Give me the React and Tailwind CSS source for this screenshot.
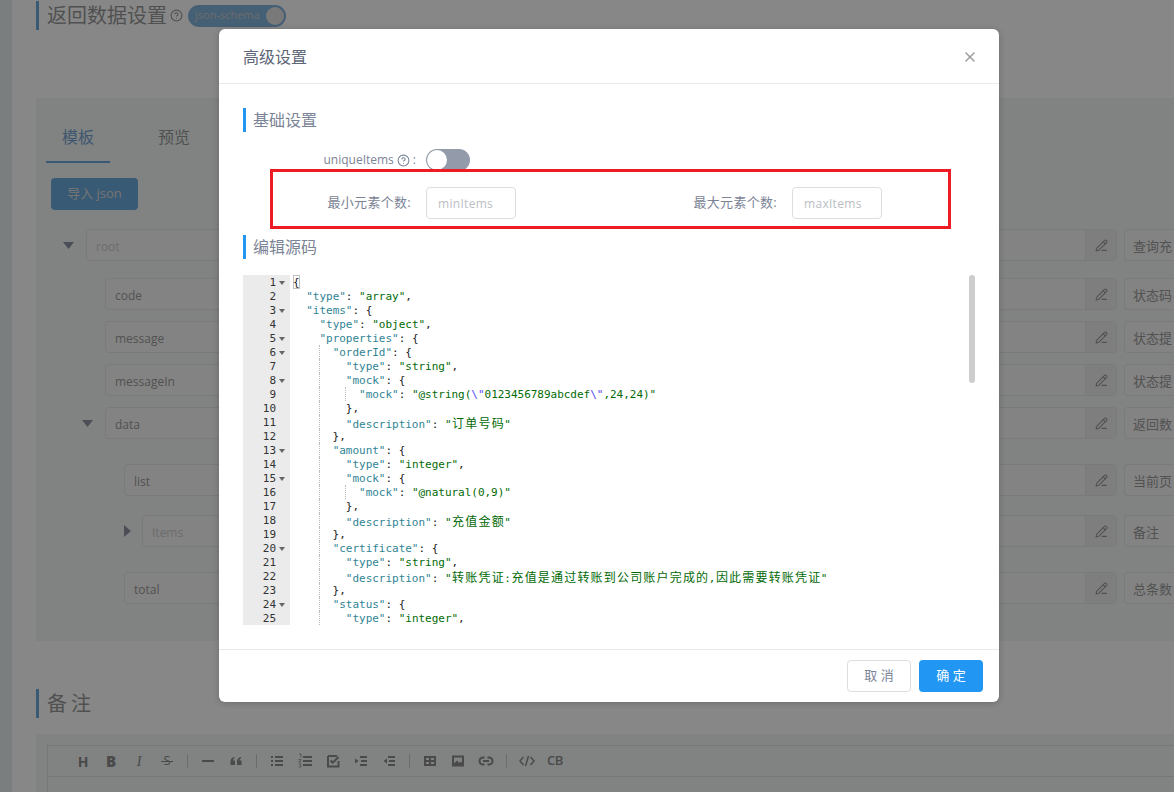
import React from "react";
import { CircleHelp, PencilLine, X } from "lucide-react";

const SANS = "font-['Open_Sans','Noto_Sans_CJK_SC',sans-serif]";

const CODE = [
  '{',
  '  "type": "array",',
  '  "items": {',
  '    "type": "object",',
  '    "properties": {',
  '      "orderId": {',
  '        "type": "string",',
  '        "mock": {',
  '          "mock": "@string(\\"0123456789abcdef\\",24,24)"',
  '        },',
  '        "description": "订单号码"',
  '      },',
  '      "amount": {',
  '        "type": "integer",',
  '        "mock": {',
  '          "mock": "@natural(0,9)"',
  '        },',
  '        "description": "充值金额"',
  '      },',
  '      "certificate": {',
  '        "type": "string",',
  '        "description": "转账凭证:充值是通过转账到公司账户完成的,因此需要转账凭证"',
  '      },',
  '      "status": {',
  '        "type": "integer",',
];
const FOLDS = [1, 3, 5, 6, 8, 13, 15, 20, 24];

function StringToken({ value }) {
  const parts = value.split(/(\\"|[\u4e00-\u9fff])/).filter(Boolean);
  return (
    <span className="text-[#036a07]">
      {parts.map((p, i) =>
        p === '\\"' ? (
          <span key={i} className="text-[#5848f6]">{p}</span>
        ) : /[\u4e00-\u9fff]/.test(p) ? (
          <span key={i} className="inline-block w-[13.2px] text-center text-[12px] leading-[14px] font-['Noto_Sans_CJK_SC',sans-serif]">{p}</span>
        ) : (
          <span key={i}>{p}</span>
        )
      )}
    </span>
  );
}

function CodeLine({ text }) {
  const m = text.match(/^(\s*)("[^"]+")(: )(".*")?(.*)$/);
  if (!m) return <span>{text}</span>;
  return (
    <span>
      {m[1]}
      <span className="text-[#318495]">{m[2]}</span>
      {m[3]}
      {m[4] ? <StringToken value={m[4]} /> : null}
      {m[5]}
    </span>
  );
}

function CodeEditor() {
  return (
    <div className="relative mt-[16px] h-[350px] overflow-hidden font-['DejaVu_Sans_Mono',monospace] text-[11px] leading-[14px] tracking-[-0.02px] text-[#222]">
      {CODE.map((line, i) => {
        const n = i + 1;
        return (
          <div key={n} className="flex h-[14px]">
            <div className="flex h-[14px] w-[47px] shrink-0 items-center bg-[#ebebeb] pt-[2px] text-[#333]">
              <span className="w-[33px] text-right">{n}</span>
              {FOLDS.includes(n) ? (
                <svg width="6" height="4" viewBox="0 0 6 4" className="ml-[3px]"><path d="M0 0h6L3 4z" fill="#666" /></svg>
              ) : null}
            </div>
            <div className="relative pt-[1px] pl-[3px] whitespace-pre">
              {n >= 6 ? <span className="absolute top-0 left-[29px] h-[14px] border-l border-dotted border-[#bbb]" /> : null}
              {n === 9 || n === 16 ? <span className="absolute top-0 left-[55px] h-[14px] border-l border-dotted border-[#bbb]" /> : null}
              {n === 1 ? <span className="absolute top-0 left-[3px] h-[14px] w-[7px] border border-[#c0c0c0]" /> : null}
              <CodeLine text={line} />
            </div>
          </div>
        );
      })}
      <div className="absolute top-0 right-0 h-[108px] w-[6px] rounded-full bg-[#cdcdcd]" />
    </div>
  );
}

function Heading({ children }) {
  return <div className="flex h-[24px] items-center border-l-[3px] border-[#2196f3] pl-[7px] text-[16px] text-[#7b8496]">{children}</div>;
}

const G = "#666";
const ICONS = {
  minus: <rect x="2" y="7" width="12" height="2" fill={G} />,
  quote: <path d="M2.5 12V8.5C2.5 6 4 4.5 6.5 4v1.6C5.4 6 5 6.7 5 7.5h2V12zM9 12V8.5C9 6 10.5 4.5 13 4v1.6c-1.1.4-1.5 1.1-1.5 1.9h2V12z" fill={G} />,
  ul: <path d="M2 3h2v2H2zM6 3h8v2H6zM2 7h2v2H2zM6 7h8v2H6zM2 11h2v2H2zM6 11h8v2H6z" fill={G} />,
  ol: (
    <>
      <path d="M6 3h9v2H6zM6 7h9v2H6zM6 11h9v2H6z" fill={G} />
      <path d="M2 1h2v3.5M1.5 6.5h2.6L1.8 9h2.4M1.8 11h2.2l-1 1 1 .5-.2 1.5H1.8" fill="none" stroke={G} strokeWidth="0.8" />
    </>
  ),
  check: <path d="M3 3h9M13.5 8v5.5H3V3M5.500 7.500l2.200 2.200L13.500 4" fill="none" stroke={G} strokeWidth="2" />,
  indent: <path d="M2 5.500l3.500 2.500L2 10.500zM7 3h7v2H7zM8 7h6v2H8zM7 11h7v2H7z" fill={G} />,
  outdent: <path d="M6 5.500L2.500 8 6 10.500zM7 3h7v2H7zM8 7h6v2H8zM7 11h7v2H7z" fill={G} />,
  table: <path fillRule="evenodd" d="M2 3h12v10H2zM4 5v2h3V5zM9 5v2h3V5zM4 9v2h3V9zM9 9v2h3V9z" fill={G} />,
  image: <path fillRule="evenodd" d="M2 2.500h12v11H2zM4 4.500v6l3-3 2.500 2.500 1.500-1.500 1 1v-5z" fill={G} />,
  link: <path d="M6.500 4.500H5a3.500 3.500 0 000 7h1.500M9.500 4.500H11a3.500 3.500 0 010 7H9.500M5 8h6" fill="none" stroke={G} strokeWidth="2" />,
  code: <path d="M4.500 4L1 8l3.500 4M11.500 4L15 8l-3.500 4M9.500 3L6.500 13" fill="none" stroke={G} strokeWidth="1.500" />,
};

function Ic({ name }) {
  return <svg width="16" height="16" viewBox="0 0 16 16">{ICONS[name]}</svg>;
}

function Toolbar() {
  const cell = "flex w-[28px] shrink-0 items-center justify-center";
  const sep = <div className="mx-[6px] h-[14px] w-px bg-[#bbb]" />;
  return (
    <div className="flex h-[31px] items-center border-b border-[#d8d8d8] pl-[21px] text-[14px] font-bold text-[#666]">
      <span className={cell}>H</span>
      <span className={cell + " text-[15px] font-extrabold"}>B</span>
      <span className={cell + " font-['Liberation_Serif',serif] font-normal italic"}>I</span>
      <span className={"relative " + cell + " text-[13px] font-normal"}>
        S
        <span className="absolute top-[10px] left-[8px] h-px w-[12px] bg-[#666]" />
      </span>
      {sep}
      <span className={cell}><Ic name="minus" /></span>
      <span className={cell}><Ic name="quote" /></span>
      {sep}
      <span className={cell}><Ic name="ul" /></span>
      <span className={cell}><Ic name="ol" /></span>
      <span className={cell}><Ic name="check" /></span>
      <span className={cell}><Ic name="indent" /></span>
      <span className={cell}><Ic name="outdent" /></span>
      {sep}
      <span className={cell}><Ic name="table" /></span>
      <span className={cell}><Ic name="image" /></span>
      <span className={cell}><Ic name="link" /></span>
      {sep}
      <span className={cell}><Ic name="code" /></span>
      <span className={cell + " text-[13px] font-semibold tracking-[-0.3px]"}>CB</span>
    </div>
  );
}

function Row({ left, value, note, mt, muted, arrow }) {
  return (
    <div className={"flex w-[1178px] items-center " + mt}>
      <div className={"flex shrink-0 items-center justify-end pr-[12px] " + left}>
        {arrow === "down" ? <svg width="11" height="7" viewBox="0 0 11 7"><path d="M0 0h11L5.500 7z" fill="#6a7285" /></svg> : null}
        {arrow === "right" ? <svg width="7" height="12" viewBox="0 0 7 12" className="mr-[-1px]"><path d="M0 0l7 6-7 6z" fill="#6a7285" /></svg> : null}
      </div>
      <div className="flex h-[32px] min-w-0 flex-1 rounded-[4px] border border-[#dddee1] bg-[#f5f5f5]">
        <div className={"flex flex-1 items-center pt-[3px] pl-[9px] text-[12px] " + (muted ? "text-[#bbb]" : "text-[#7a7a7a]")}>{value}</div>
        <div className="flex w-[31px] items-center justify-center rounded-r-[4px] border-l border-[#dddee1] bg-[#e9e9e9] text-[#777]">
          <PencilLine className="h-[13px] w-[13px]" />
        </div>
      </div>
      <div className="ml-[7px] flex h-[32px] w-[90px] shrink-0 items-center rounded-l-[4px] border border-r-0 border-[#dddee1] bg-[#f5f5f5] pt-[3px] pl-[8px] text-[13px] whitespace-nowrap text-[#7a7a7a]">{note}</div>
    </div>
  );
}

function BackgroundPage() {
  return (
    <div className="flex h-[792px] w-[1174px] overflow-hidden bg-white">
      <div className="w-[12px] shrink-0 bg-[#e2e8ec]" />
      <div className="w-[1162px] shrink-0 pl-[24px]">
        <div className="mt-[1px] flex h-[29px] items-center border-l-[3px] border-[#3d8fd1] pl-[8px] text-[20px] text-[#777]">
          <span>返回数据设置</span>
          <CircleHelp className="ml-[3px] h-[13px] w-[13px] text-[#777]" />
          <div className="ml-[5px] flex h-[22px] w-[98px] items-center justify-between rounded-full bg-[#5b9bd1] pr-[2px] pl-[7px] text-[11px] text-[#bbb]">
            <span>json-schema</span>
            <span className="h-[18px] w-[18px] rounded-full bg-[#ddd]" />
          </div>
        </div>
        <div className="mt-[68px] h-[543px] overflow-hidden bg-[#edf5f2]">
          <div className="ml-[10px] flex pt-[26px] text-[16px]">
            <div className="flex h-[39px] w-[64px] items-start justify-center border-b-2 border-[#3d8fd1] pt-[1px] text-[#4a86c5]">模板</div>
            <div className="ml-[32px] flex h-[39px] w-[64px] items-start justify-center pt-[1px] text-[#777]">预览</div>
          </div>
          <div className="mt-[15px] ml-[15px] flex h-[32px] w-[87px] items-center justify-center rounded-[4px] bg-[#3d8fd1] text-[13px] text-[#d0d0d0]">导入 json</div>
          <Row left="w-[50px]" value="root" note="查询充" mt="mt-[19px]" muted arrow="down" />
          <Row left="w-[69px]" value="code" note="状态码" mt="mt-[17px]" />
          <Row left="w-[69px]" value="message" note="状态提" mt="mt-[11px]" />
          <Row left="w-[69px]" value="messageIn" note="状态提" mt="mt-[11px]" />
          <Row left="w-[69px]" value="data" note="返回数" mt="mt-[11px]" arrow="down" />
          <Row left="w-[88px]" value="list" note="当前页" mt="mt-[25px]" />
          <Row left="w-[106px]" value="Items" note="备注" mt="mt-[19px]" muted arrow="right" />
          <Row left="w-[88px]" value="total" note="总条数" mt="mt-[25px]" />
        </div>
        <div className="mt-[48px] flex h-[29px] items-center border-l-[3px] border-[#3d8fd1] pl-[8px] text-[20px] tracking-[4px] text-[#777]">备注</div>
        <div className="mt-[16px] h-[100px] bg-[#edf5f2] pt-[11px] pl-[11px]">
          <div className="h-[100px] border-t border-l border-[#d8d8d8]">
            <Toolbar />
          </div>
        </div>
      </div>
    </div>
  );
}

function TextBox({ placeholder }) {
  return (
    <input
      readOnly
      placeholder={placeholder}
      className="ml-[15px] h-[32px] w-[90px] rounded-[4px] border border-[#dddee1] px-[11px] text-[12px] placeholder:text-[#bbbec4]"
    />
  );
}

function Modal() {
  return (
    <div className="absolute top-[29px] left-[219px] flex h-[673px] w-[780px] flex-col rounded-[6px] bg-white shadow-[0_1px_6px_rgba(0,0,0,0.2)]">
      <div className="flex h-[55px] shrink-0 items-center justify-between border-b border-[#e9eaec] pt-[1px] pr-[21px] pl-[24px] text-[16px] text-[#5d6676]">
        <span>高级设置</span>
        <X className="h-[16px] w-[16px] text-[#999]" />
      </div>
      <div className="flex-1 px-[24px] pt-[24px]">
        <Heading>基础设置</Heading>
        <div className="mt-[17px] flex h-[22px] items-center">
          <div className="flex w-[183px] items-center justify-end pr-[10px] text-[12px] text-[#7b8496]">
            <span>uniqueItems</span>
            <CircleHelp className="mx-[3px] h-[13px] w-[13px]" />
            <span>:</span>
          </div>
          <div className="flex h-[22px] w-[44px] items-center rounded-full bg-[#939aaa] pl-[1px]">
            <span className="h-[20px] w-[20px] rounded-full bg-white" />
          </div>
        </div>
        <div className="mt-[16px] flex h-[32px] items-center text-[13px] tracking-[0.3px] text-[#7b8496]">
          <div className="w-[168px] text-right">最小元素个数:</div>
          <TextBox placeholder="minItems" />
          <div className="w-[261px] text-right">最大元素个数:</div>
          <TextBox placeholder="maxItems" />
        </div>
        <div className="mt-[16px]"><Heading>编辑源码</Heading></div>
        <CodeEditor />
      </div>
      <div className="flex h-[53px] shrink-0 items-start justify-end gap-[8px] border-t border-[#e9eaec] pt-[10px] pr-[16px]">
        <button className="h-[32px] w-[64px] rounded-[4px] border border-[#dddee1] text-[13px] text-[#7b8496]">取 消</button>
        <button className="h-[32px] w-[64px] rounded-[4px] bg-[#2196f3] text-[13px] text-white">确 定</button>
      </div>
      <div className="absolute top-[140px] left-[51px] h-[60px] w-[681px] border-[3px] border-[#ed1c24]" />
    </div>
  );
}

export default function App() {
  return (
    <div className={"relative h-[792px] w-[1174px] overflow-hidden " + SANS}>
      <BackgroundPage />
      <div className="absolute inset-0 bg-[rgba(55,55,55,0.6)]" />
      <Modal />
    </div>
  );
}
